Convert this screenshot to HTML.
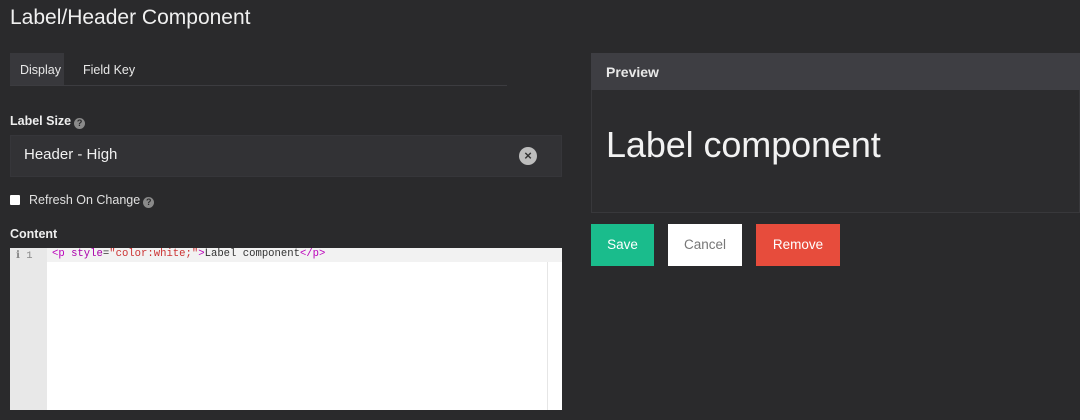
<!DOCTYPE html>
<html><head><style>
body{margin:0;width:1080px;height:420px;background:#2a2a2c;font-family:"Liberation Sans",sans-serif;color:#fff;position:relative;overflow:hidden}
.a{position:absolute}
.q{display:inline-block;width:11px;height:11px;border-radius:50%;background:#8a8a8a;color:#2a2a2c;font-size:9px;line-height:11px;text-align:center;font-weight:bold;vertical-align:-1px;margin-left:3px}
</style></head><body>
<div class="a" style="left:10px;top:6px;font-size:21px;color:#f0f0f0">Label/Header Component</div>
<div class="a" style="left:10px;top:53px;width:54px;height:33px;background:#38383c"></div>
<div class="a" style="left:20px;top:63px;font-size:12.5px;color:#e8e8e8">Display</div>
<div class="a" style="left:83px;top:63px;font-size:12.5px;color:#e8e8e8">Field Key</div>
<div class="a" style="left:10px;top:85px;width:497px;height:1px;background:#3c3c40"></div>
<div class="a" style="left:10px;top:114px;font-size:12.5px;font-weight:bold;color:#eee">Label Size<span class="q">?</span></div>
<div class="a" style="left:10px;top:135px;width:552px;height:42px;background:#323235;border:1px solid #36363a;box-sizing:border-box"></div>
<div class="a" style="left:24px;top:146px;font-size:15px;color:#f0f0f0">Header - High</div>
<div class="a" style="left:519px;top:147px;width:18px;height:18px;border-radius:50%;background:#bdbdbd;color:#333;font-size:13px;line-height:18px;text-align:center;font-weight:bold">×</div>
<div class="a" style="left:10px;top:195px;width:10px;height:10px;background:#fff;border-radius:1px"></div>
<div class="a" style="left:29px;top:193px;font-size:12.5px;color:#e0e0e0">Refresh On Change<span class="q">?</span></div>
<div class="a" style="left:10px;top:227px;font-size:12.5px;font-weight:bold;color:#eee">Content</div>
<div class="a" style="left:10px;top:248px;width:552px;height:162px;background:#fff"></div>
<div class="a" style="left:10px;top:248px;width:37px;height:162px;background:#e8e8e8"></div>
<div class="a" style="left:47px;top:248px;width:515px;height:14px;background:#f2f2f2"></div>
<div class="a" style="left:547px;top:262px;width:1px;height:148px;background:#e6e6e6"></div>
<div class="a" style="left:16px;top:249px;font-size:10.5px;color:#888;font-family:'Liberation Mono',monospace">ℹ 1</div>
<div class="a" style="left:52px;top:248px;font-size:10.6px;font-family:'Liberation Mono',monospace;color:#333;white-space:pre"><span style="color:#b0b">&lt;p</span> <span style="color:#a0a">style</span>=<span style="color:#c33">"color:white;"</span><span style="color:#b0b">&gt;</span>Label component<span style="color:#b0b">&lt;/p&gt;</span></div>
<div class="a" style="left:591px;top:53px;width:489px;height:160px;background:#2c2c2e;border:1px solid #38383b;box-sizing:border-box"></div>
<div class="a" style="left:591px;top:53px;width:489px;height:37px;background:#3e3e43"></div>
<div class="a" style="left:606px;top:64px;font-size:14px;font-weight:bold;color:#e8e8e8">Preview</div>
<div class="a" style="left:606px;top:124px;font-size:36px;color:#f2f2f2;letter-spacing:-0.1px">Label component</div>
<div class="a" style="left:591px;top:224px;width:63px;height:42px;background:#1abc8c;font-size:13.5px;line-height:42px;text-align:center">Save</div>
<div class="a" style="left:668px;top:224px;width:74px;height:42px;background:#fff;color:#777;font-size:13.5px;line-height:42px;text-align:center">Cancel</div>
<div class="a" style="left:756px;top:224px;width:84px;height:42px;background:#e74c3c;font-size:13.5px;line-height:42px;text-align:center">Remove</div>
</body></html>
